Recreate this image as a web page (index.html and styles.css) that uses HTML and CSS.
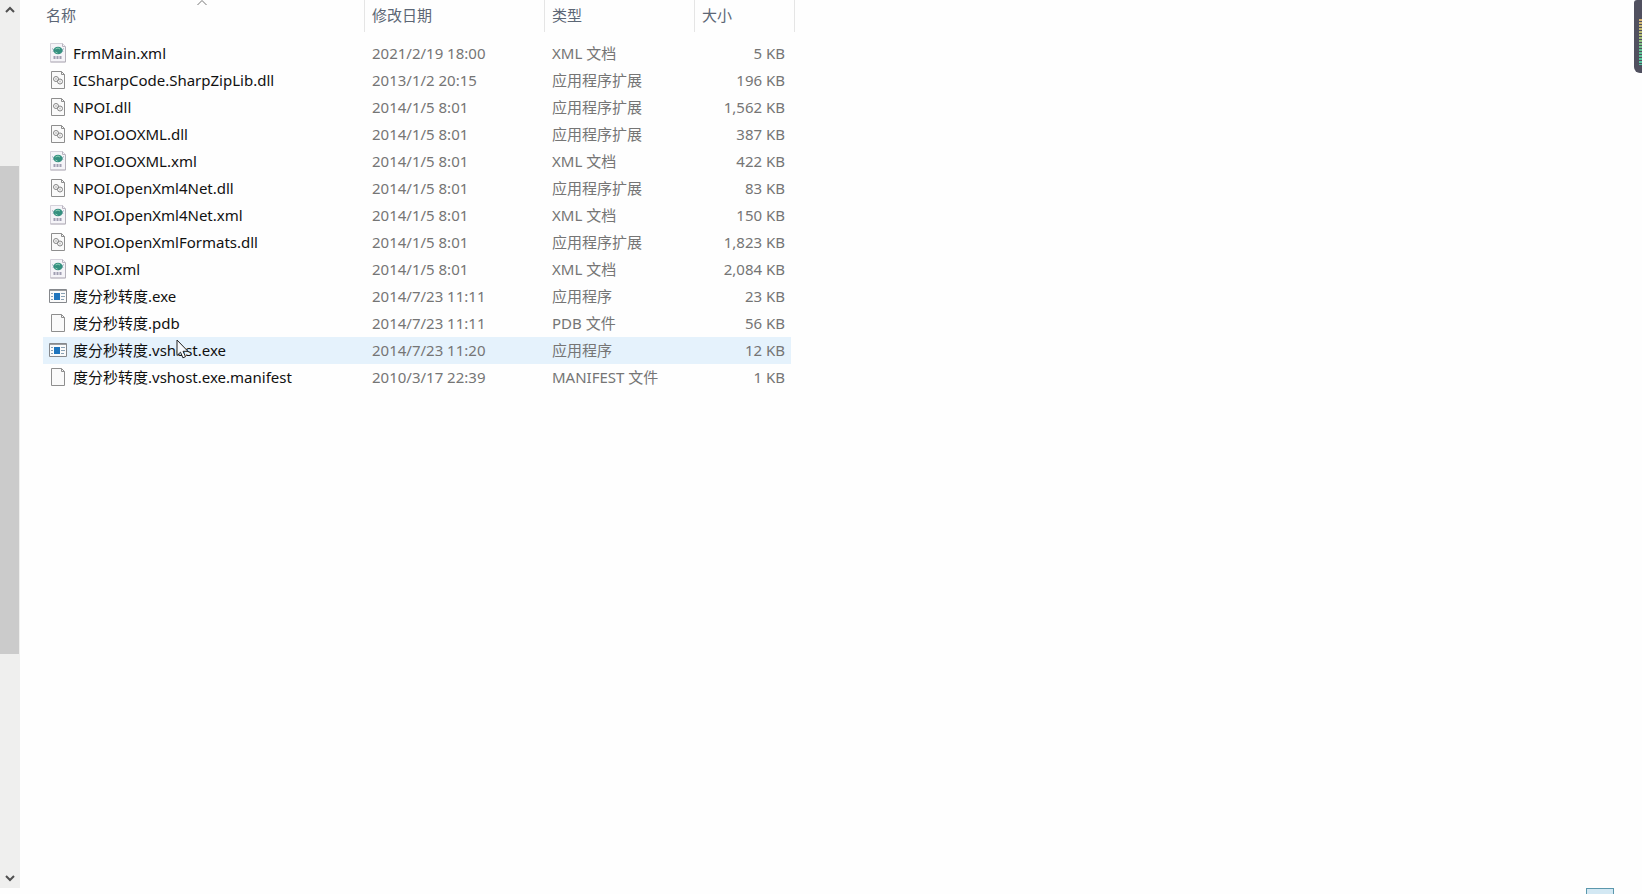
FILE: index.html
```html
<!DOCTYPE html>
<html lang="zh-CN">
<head>
    <meta charset="UTF-8">
    <meta name="viewport" content="width=device-width, initial-scale=1.0">
    <title>文件列表</title>
    <link rel="stylesheet" href="styles.css">
</head>
<body>

<!-- File type icons -->
<svg class="icon-defs" aria-hidden="true">
    <symbol id="icon-xml" viewBox="0 0 18 20">
        <path d="M1.500 .5h12l3 3v15.500h-15z" fill="#f5f4f8" stroke="#d5d1da"/>
        <path d="M16.500 4v15h-15" fill="none" stroke="#b5b2bb"/>
        <path d="M13.500 .5v3h3" fill="none" stroke="#b9b5c0"/>
        <path d="M3 5.500l2 1.500-1 2M15 5.500l-2 1.500 1 2" fill="none" stroke="#9bb0bf"/>
        <ellipse cx="9" cy="7.500" rx="4.500" ry="3.800" fill="#35907f"/>
        <path d="M6.500 6l2.500-1 2 1M6.500 9l2 1" fill="none" stroke="#8fd0b8"/>
        <path d="M4.500 14.500h9" stroke="#a09eb2" stroke-width="3" stroke-dasharray="2 1"/>
    </symbol>
    <symbol id="icon-dll" viewBox="0 0 18 20">
        <path d="M2.500 1.500h10l3 3v14h-13z" fill="#fafafa" stroke="#8e8e8e"/>
        <path d="M12.500 1.500v3h3" fill="none" stroke="#8e8e8e"/>
        <circle cx="7" cy="9" r="2.500" fill="none" stroke="#858585"/>
        <circle cx="7" cy="9" r="1" fill="#c5c5c5"/>
        <circle cx="11" cy="11.500" r="2.500" fill="none" stroke="#858585"/>
        <circle cx="11" cy="11.500" r="1" fill="#c5c5c5"/>
    </symbol>
    <symbol id="icon-exe" viewBox="0 0 18 20">
        <path d="M.5 3.500h17v13h-17z" fill="#fafafa" stroke="#85888c"/>
        <path d="M1 4.500h16" stroke="#9a9da0"/>
        <path d="M5 7h6v7h-6z" fill="#1f75bd"/>
        <path d="M2 7.500h2M2 10.500h2M2 13.500h2M12 7.500h4M12 10.500h4M12 13.500h3" stroke="#8aa2b5"/>
    </symbol>
    <symbol id="icon-file" viewBox="0 0 18 20">
        <path d="M2.500 1.500h10l3 3v14h-13z" fill="#fafafa" stroke="#8e8e8e"/>
        <path d="M12.500 1.500v3h3" fill="none" stroke="#8e8e8e"/>
    </symbol>
</svg>

<div class="explorer">
    <!-- Scrollbar of the folder tree -->
    <div class="scrollbar">
        <button class="scroll-button" aria-label="向上滚动">
            <svg width="10" height="8" viewBox="0 0 10 8"><path d="M1 6l4-4 4 4" fill="none" stroke="#505050" stroke-width="2"/></svg>
        </button>
        <div class="scroll-before"></div>
        <div class="scroll-thumb"></div>
        <div class="scroll-after"></div>
        <button class="scroll-button" aria-label="向下滚动">
            <svg width="10" height="8" viewBox="0 0 10 8"><path d="M1 2l4 4 4-4" fill="none" stroke="#505050" stroke-width="2"/></svg>
        </button>
    </div>

    <!-- File list -->
    <main class="file-pane">
        <table class="file-table">
            <thead>
                <tr>
                    <th class="col-name">
                        <button class="sort-button">名称</button>
                        <svg class="sort-arrow" width="10" height="6" viewBox="0 0 10 6"><path d="M.5 5l4.500-4.500 4.500 4.500" fill="none" stroke="#777"/></svg>
                    </th>
                    <th class="col-date"><button class="sort-button">修改日期</button></th>
                    <th class="col-type"><button class="sort-button">类型</button></th>
                    <th class="col-size"><button class="sort-button">大小</button></th>
                </tr>
            </thead>
            <tbody>
                <tr>
                    <td><div class="file-name"><svg class="icon"><use href="#icon-xml"/></svg>FrmMain.xml</div></td>
                    <td>2021/2/19 18:00</td>
                    <td>XML 文档</td>
                    <td class="size">5 KB</td>
                </tr>
                <tr>
                    <td><div class="file-name"><svg class="icon"><use href="#icon-dll"/></svg>ICSharpCode.SharpZipLib.dll</div></td>
                    <td>2013/1/2 20:15</td>
                    <td>应用程序扩展</td>
                    <td class="size">196 KB</td>
                </tr>
                <tr>
                    <td><div class="file-name"><svg class="icon"><use href="#icon-dll"/></svg>NPOI.dll</div></td>
                    <td>2014/1/5 8:01</td>
                    <td>应用程序扩展</td>
                    <td class="size">1,562 KB</td>
                </tr>
                <tr>
                    <td><div class="file-name"><svg class="icon"><use href="#icon-dll"/></svg>NPOI.OOXML.dll</div></td>
                    <td>2014/1/5 8:01</td>
                    <td>应用程序扩展</td>
                    <td class="size">387 KB</td>
                </tr>
                <tr>
                    <td><div class="file-name"><svg class="icon"><use href="#icon-xml"/></svg>NPOI.OOXML.xml</div></td>
                    <td>2014/1/5 8:01</td>
                    <td>XML 文档</td>
                    <td class="size">422 KB</td>
                </tr>
                <tr>
                    <td><div class="file-name"><svg class="icon"><use href="#icon-dll"/></svg>NPOI.OpenXml4Net.dll</div></td>
                    <td>2014/1/5 8:01</td>
                    <td>应用程序扩展</td>
                    <td class="size">83 KB</td>
                </tr>
                <tr>
                    <td><div class="file-name"><svg class="icon"><use href="#icon-xml"/></svg>NPOI.OpenXml4Net.xml</div></td>
                    <td>2014/1/5 8:01</td>
                    <td>XML 文档</td>
                    <td class="size">150 KB</td>
                </tr>
                <tr>
                    <td><div class="file-name"><svg class="icon"><use href="#icon-dll"/></svg>NPOI.OpenXmlFormats.dll</div></td>
                    <td>2014/1/5 8:01</td>
                    <td>应用程序扩展</td>
                    <td class="size">1,823 KB</td>
                </tr>
                <tr>
                    <td><div class="file-name"><svg class="icon"><use href="#icon-xml"/></svg>NPOI.xml</div></td>
                    <td>2014/1/5 8:01</td>
                    <td>XML 文档</td>
                    <td class="size">2,084 KB</td>
                </tr>
                <tr>
                    <td><div class="file-name"><svg class="icon"><use href="#icon-exe"/></svg>度分秒转度.exe</div></td>
                    <td>2014/7/23 11:11</td>
                    <td>应用程序</td>
                    <td class="size">23 KB</td>
                </tr>
                <tr>
                    <td><div class="file-name"><svg class="icon"><use href="#icon-file"/></svg>度分秒转度.pdb</div></td>
                    <td>2014/7/23 11:11</td>
                    <td>PDB 文件</td>
                    <td class="size">56 KB</td>
                </tr>
                <tr class="hovered">
                    <td>
                        <div class="file-name"><svg class="icon"><use href="#icon-exe"/></svg>度分秒转度.vshost.exe</div>
                        <svg class="cursor" width="13" height="20" viewBox="0 0 13 20"><path d="M1 1v15.500l3.500-3.300 2.400 5.600 2.600-1.100-2.400-5.400h4.800z" fill="#f6f9fc" stroke="#222"/></svg>
                    </td>
                    <td>2014/7/23 11:20</td>
                    <td>应用程序</td>
                    <td class="size">12 KB</td>
                </tr>
                <tr>
                    <td><div class="file-name"><svg class="icon"><use href="#icon-file"/></svg>度分秒转度.vshost.exe.manifest</div></td>
                    <td>2010/3/17 22:39</td>
                    <td>MANIFEST 文件</td>
                    <td class="size">1 KB</td>
                </tr>
            </tbody>
        </table>
    </main>
</div>

<!-- Level meter docked at the screen edge -->
<div class="meter"><div class="meter-bars"></div></div>

<!-- View mode button of the status bar -->
<button class="view-button" aria-label="详细信息"></button>

</body>
</html>
```
FILE: styles.css
```css
* {
    box-sizing: border-box;
}

body {
    margin: 0;
    background-color: #fefefe;
    font-family: "Noto Sans", "Noto Sans CJK SC", sans-serif;
    font-size: 15px;
    color: #757575;
    overflow: hidden;
}

button {
    padding: 0;
    border: none;
    background: none;
    font: inherit;
    color: inherit;
}

.icon-defs {
    display: none;
}

.explorer {
    display: flex;
    height: 100vh;
}

/* Scrollbar */
.scrollbar {
    display: flex;
    flex-direction: column;
    width: 20px;
    margin-bottom: 6px;
    padding-right: 1px;
    background-color: #efefee;
}

.scroll-button {
    display: flex;
    justify-content: center;
    align-items: center;
    height: 20px;
}

.scroll-before {
    flex: 17;
}

.scroll-thumb {
    flex: 57;
    background-color: #cbcbcb;
}

.scroll-after {
    flex: 25;
}

/* File list */
.file-pane {
    flex: 1;
    padding-left: 23px;
}

.file-table {
    width: 752px;
    table-layout: fixed;
    border-collapse: separate;
    border-spacing: 0;
}

th {
    position: relative;
    height: 32px;
    padding: 0 0 2px 7px;
    border-right: 1px solid #e5e5e5;
    font-weight: normal;
    text-align: left;
    color: #5c6675;
}

.col-name {
    width: 322px;
    padding-left: 3px;
}

.col-date {
    width: 180px;
}

.col-type {
    width: 150px;
}

.col-size {
    width: 100px;
}

.sort-button {
    display: block;
    line-height: 30px;
}

.sort-arrow {
    position: absolute;
    top: 0;
    left: 50%;
    margin-left: -7px;
}

tbody::before {
    content: "";
    display: block;
    height: 8px;
}

td {
    position: relative;
    height: 27px;
    padding: 0 0 0 7px;
    line-height: 27px;
    white-space: nowrap;
}

td:first-child {
    padding-left: 6px;
    color: #111;
}

.file-name {
    display: flex;
    align-items: center;
    gap: 6px;
    height: 27px;
}

.icon {
    width: 18px;
    height: 20px;
    margin-bottom: 2px;
}

.size {
    padding-right: 6px;
    border-right: 4px solid transparent;
    background-clip: padding-box;
    text-align: right;
}

.hovered td {
    background-color: #e5f2fc;
}

.cursor {
    position: absolute;
    top: 2px;
    left: 133px;
}

/* Level meter */
.meter {
    position: fixed;
    top: 0;
    right: 0;
    width: 8px;
    height: 73px;
    padding: 19px 0 8px 5px;
    border-radius: 3px 0 0 6px;
    background-color: #50505f;
}

.meter-bars {
    height: 100%;
    background: repeating-linear-gradient(transparent 0 2px, #50505f 2px 3px), linear-gradient(#d8b574, #b5bd72, #5fc391, #54c9a2);
}

/* Status bar button */
.view-button {
    position: fixed;
    right: 28px;
    bottom: 0;
    width: 28px;
    height: 6px;
    border: 1px solid #5b98ad;
    border-bottom: none;
    background-color: #d3e8f3;
}
```
